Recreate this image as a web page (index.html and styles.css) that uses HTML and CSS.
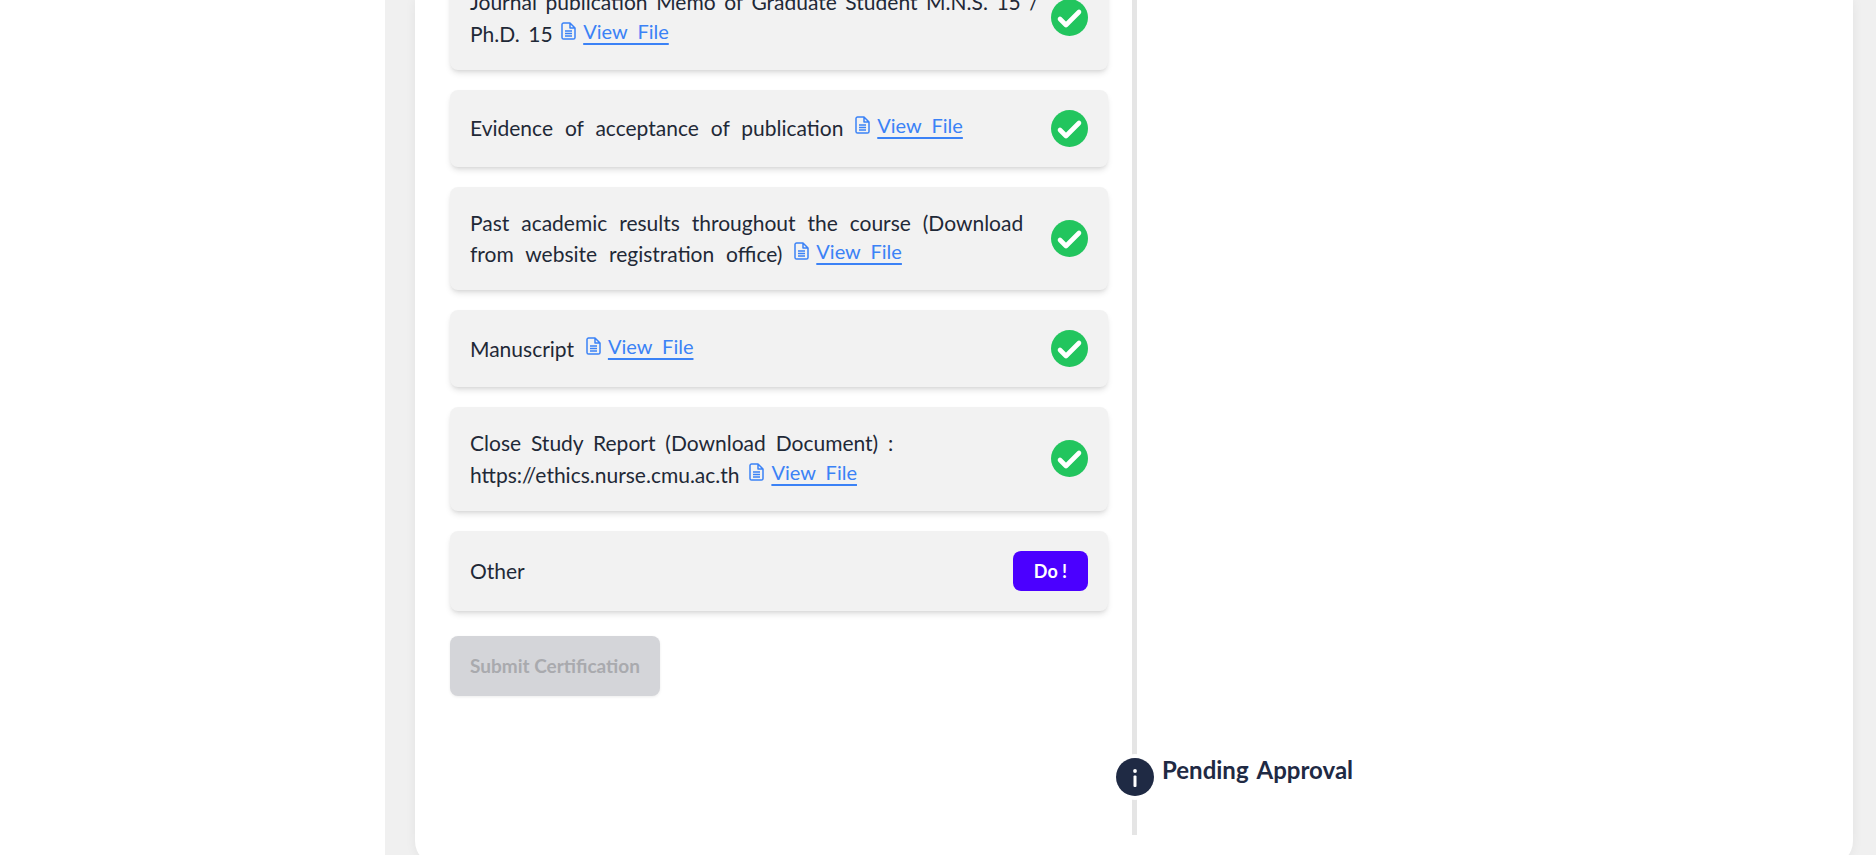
FILE: index.html
```html
<!DOCTYPE html>
<html lang="en">
<head>
<meta charset="utf-8">
<title>Certification</title>
<link rel="stylesheet" href="styles.css">
</head>
<body>
<svg class="defs" width="0" height="0" aria-hidden="true">
  <symbol id="doc" viewBox="0 0 15 18"><path d="M2.6 1H9l5 5v9.4a1.6 1.6 0 0 1-1.6 1.6H2.6A1.6 1.6 0 0 1 1 15.4V2.6A1.6 1.6 0 0 1 2.6 1zM9 1v5h5M4 9h7M4 11.5h7M4 14h7" fill="none" stroke="currentColor" stroke-width="1.5" stroke-linejoin="round"/></symbol>
  <symbol id="ok" viewBox="0 0 37 37"><circle cx="18.5" cy="18.5" r="18.5" fill="#22c55e"/><path d="M9 20l6 6L28 13" fill="none" stroke="#fff" stroke-width="4.6" stroke-linecap="round" stroke-linejoin="round"/></symbol>
</svg>
<main class="page">
  <section class="card">
    <div class="docs">
      <ul class="list">
        <li class="item"><p class="label label-tightest">Journal publication Memo of Graduate Student M.N.S. 15 / Ph.D. 15 <a class="file" href="#"><svg class="doc"><use href="#doc"/></svg><span class="view">View File</span></a></p><svg class="ok"><use href="#ok"/></svg></li>
        <li class="item"><p class="label">Evidence of acceptance of publication <a class="file" href="#"><svg class="doc"><use href="#doc"/></svg><span class="view">View File</span></a></p><svg class="ok"><use href="#ok"/></svg></li>
        <li class="item"><p class="label">Past academic results throughout the course (Download from website registration office) <a class="file" href="#"><svg class="doc"><use href="#doc"/></svg><span class="view">View File</span></a></p><svg class="ok"><use href="#ok"/></svg></li>
        <li class="item"><p class="label">Manuscript <a class="file" href="#"><svg class="doc"><use href="#doc"/></svg><span class="view">View File</span></a></p><svg class="ok"><use href="#ok"/></svg></li>
        <li class="item"><p class="label label-tight">Close Study Report (Download Document) : https://ethics.nurse.cmu.ac.th <a class="file" href="#"><svg class="doc"><use href="#doc"/></svg><span class="view">View File</span></a></p><svg class="ok"><use href="#ok"/></svg></li>
        <li class="item"><p class="label">Other</p><button class="do" type="button">Do !</button></li>
      </ul>
      <button class="submit" type="button" disabled>Submit Certification</button>
    </div>
    <aside class="timeline">
      <div class="step">
        <span class="marker"><svg width="38" height="38" viewBox="0 0 38 38"><circle cx="19" cy="19" r="19" fill="#1f2a44"/><circle cx="19" cy="13" r="1.9" fill="#fff"/><rect x="17.5" y="17.5" width="3" height="11.5" rx="1" fill="#fff"/></svg></span>
        <h3 class="status">Pending Approval</h3>
      </div>
    </aside>
  </section>
</main>
</body>
</html>
```
FILE: styles.css
```css
* { box-sizing: border-box; }
html, body { margin: 0; height: 855px; overflow: hidden; background: #fff; }
body { font-family: "Lato", "Noto Sans", sans-serif; color: #1f2937; }
.defs { position: absolute; }
.page { margin-left: 385px; height: 855px; padding: 0 23px 0 30px; background: #f0f0f0; overflow: hidden; }
.card { display: flex; height: 865px; background: #fff; border-radius: 0 0 24px 24px; box-shadow: 0 0 12px rgba(0,0,0,.06); }
.docs { width: 717px; flex: none; padding: 0 24px 0 35px; }
.list { list-style: none; margin: -34px 0 0; padding: 0; display: flex; flex-direction: column; gap: 20px; }
.item { display: flex; align-items: center; justify-content: space-between; gap: 8px; padding: 20px; background: #f2f2f2; border-radius: 8px; box-shadow: 0 4px 6px -1px rgba(0,0,0,.12), 0 2px 4px -2px rgba(0,0,0,.1); }
.label { margin: 0; font-size: 21px; line-height: 31.75px; word-spacing: 6.5px; }
.label-tight { word-spacing: 4.5px; }
.label-tightest { word-spacing: 3.2px; }
.file { color: #3b82f6; font-size: 20px; line-height: 1; word-spacing: 5px; text-decoration: none; white-space: nowrap; position: relative; top: -3px; }
.doc { width: 15px; height: 18px; vertical-align: -1px; margin-right: 7px; }
.view { text-decoration: underline; text-decoration-thickness: 2px; text-underline-offset: 4px; }
.ok { width: 37px; height: 37px; flex: none; }
.do { width: 75px; height: 40px; flex: none; border: 0; border-radius: 8px; background: #4b00ff; color: #fff; font: 700 18px "Lato", sans-serif; }
.submit { display: block; width: 210px; height: 60px; margin-top: 25px; border: 0; border-radius: 8px; background: #d4d5d9; color: #a9aaae; font: 700 19px "Lato", sans-serif; box-shadow: 0 1px 3px rgba(0,0,0,.08); }
.timeline { flex: 1; height: 835px; border-left: 5px solid #e5e5e5; display: flex; flex-direction: column; justify-content: flex-end; padding-bottom: 39px; }
.step { display: flex; align-items: flex-start; margin-left: -21px; gap: 8px; }
.marker { flex: none; width: 38px; height: 38px; border-radius: 50%; box-shadow: 0 0 0 4px #fff; }
.marker svg { display: block; }
.status { margin: -4px 0 0; font-size: 24px; line-height: 32px; font-weight: 700; color: #1f2a44; word-spacing: 3px; }
```
